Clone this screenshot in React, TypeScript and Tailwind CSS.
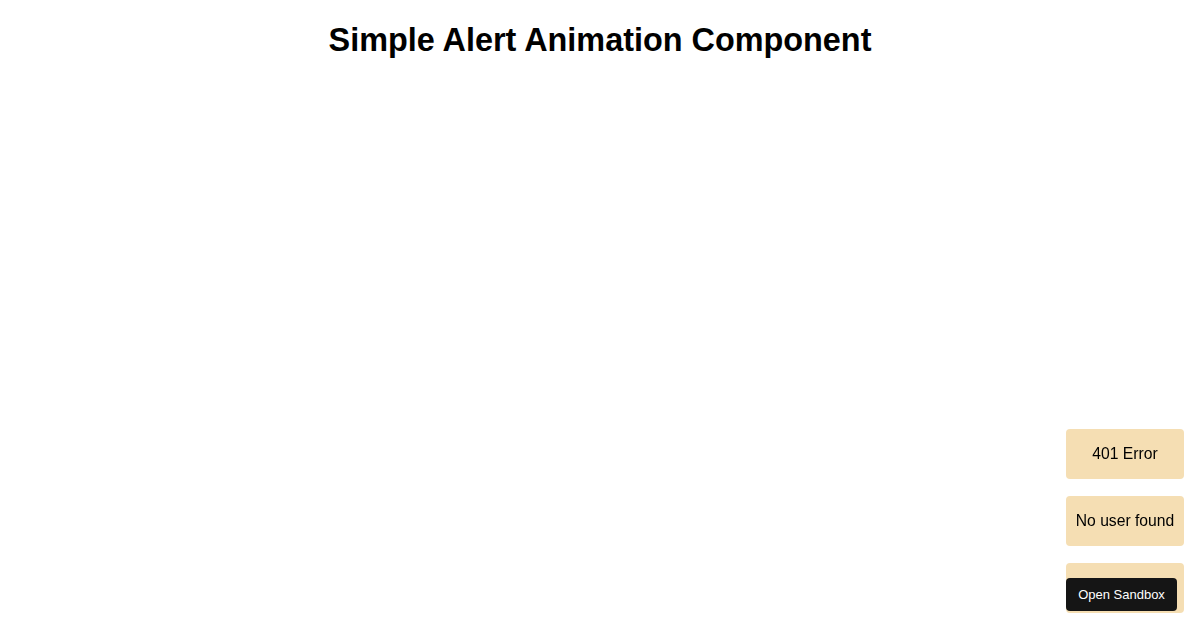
import React from 'react';

// third alert sits under the sandbox button, its text isn't visible
const alerts = ['401 Error', 'No user found', ''];

const App: React.FC = () => {
  return (
    <div className="min-h-screen w-full bg-white font-['Liberation_Sans',Arial,sans-serif] text-black">
      <h1 className="pt-[22px] text-center text-[32.4px] font-bold leading-[37px]">
        Simple Alert Animation Component
      </h1>

      {/* alert stack, pinned to the bottom right */}
      <div className="fixed bottom-[17px] right-[16px] flex w-[118px] flex-col gap-[17px]">
        {alerts.map((a, i) => (
          <div
            key={i}
            className="flex h-[50px] items-center justify-center rounded-[4px] bg-[#f5deb3] text-[15.7px]"
          >
            {a}
          </div>
        ))}
      </div>

      <button className="fixed bottom-[19px] right-[23px] flex h-[33px] w-[111px] items-center justify-center rounded-[4px] bg-[#151515] text-[13px] text-white">
        Open Sandbox
      </button>
    </div>
  );
};

export default App;
